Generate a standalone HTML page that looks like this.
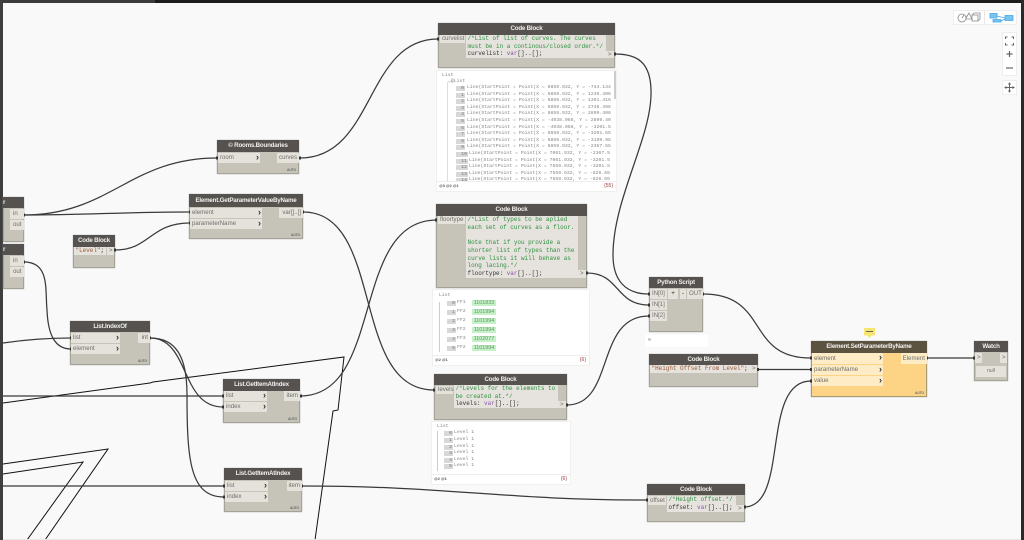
<!DOCTYPE html>
<html>
<head>
<meta charset="utf-8">
<style>
html,body{margin:0;padding:0;width:1024px;height:540px;overflow:hidden;background:#f9f9f9}
body{position:relative;font-family:"Liberation Sans",sans-serif}
#wrap{position:absolute;left:0;top:0;width:1024px;height:540px;filter:blur(.35px)}
.a,.n,.h,.p,.c,.pv{position:absolute;box-sizing:border-box}
.n{background:#c6c3b9;border:1px solid #a5a296;box-shadow:0 0 1px #999}
.h{background:#56524f;color:#f1f0ec;font-weight:bold;font-size:6.2px;letter-spacing:-.2px;text-align:center;z-index:2;line-height:11px}
.p{background:#e5e2dc;color:#6f6e6a;font-size:6.1px;line-height:10px;padding-left:2px;white-space:nowrap;z-index:2}
.r{text-align:right;padding:0 2px 0 0}
.p b{position:absolute;right:1px;top:-1px;color:#333;font-size:9px;font-weight:bold}
.c{background:#e6e3de;font-family:"Liberation Mono",monospace;font-size:5.95px;line-height:7.7px;white-space:pre;color:#333;z-index:2;padding-left:1.5px;overflow:hidden}
.g{color:#2f9040}.v{color:#8a55a8}.s{color:#9a5a3a}
.pv{background:#fff;border:1px solid #f0f0ee;font-family:"Liberation Mono",monospace;font-size:4.8px;color:#858585;overflow:hidden;white-space:pre}
.l{position:absolute;white-space:pre;line-height:6px}
.idx{position:absolute;background:#d8d8d8;color:#777;text-align:right;height:5px;line-height:5px;width:9px;padding-right:1px;box-sizing:border-box}
.grn{position:absolute;background:#c5f0c8;color:#5f9a62;height:6px;line-height:6px;width:24px;text-align:center;font-family:"Liberation Sans",sans-serif;font-size:5.4px}
.ft{position:absolute;left:0;right:0;bottom:0;height:10px;border-top:1px solid #eee;background:#fff;font:bold 3.8px/9px "Liberation Sans",sans-serif;color:#555;padding-left:2px;box-sizing:border-box}
.ft i{position:absolute;right:3px;top:0;color:#a04040;font:5px/9px "Liberation Sans",sans-serif}
.auto{position:absolute;right:2px;bottom:1px;font-size:3.2px;font-weight:bold;color:#666;z-index:2}
svg{position:absolute;left:0;top:0}
.ic{position:absolute;background:#fff;border:1px solid #eee;box-sizing:border-box}
</style>
</head>
<body>
<div id="wrap">
<div class="a" style="left:0;top:0;width:155px;height:3px;background:#3c3c3c"></div>
<div class="a" style="left:155px;top:0;width:869px;height:3px;background:#1c1c1c"></div>
<div class="a" style="left:0;top:0;width:3px;height:540px;background:#3e3e3e"></div>
<div class="a" style="left:1021px;top:0;width:3px;height:540px;background:#2a2a2a"></div>

<svg width="1024" height="540" fill="none" stroke="#111" stroke-width="1">
<path d="M3,403L150,383L153,382L344,357L338,410L333,411L315,540"/>
<path d="M3,464L108,449L45,540"/>
<path d="M3,474L83,462L27,540"/>
<g stroke="#3a3a3a" stroke-width="1.25">
<path d="M24,215C110,215 130,158 217,158"/>
<path d="M24,215C90,215 120,212 190,212"/>
<path d="M115,250C150,250 150,223 190,223"/>
<path d="M24,262C50,262 45,290 47,310C48,335 55,349 71,349"/>
<path d="M3,343C30,339 50,338 71,338"/>
<path d="M150,338C190,338 180,407 223,407"/>
<path d="M150,338C175,338 187,355 187,395C187,460 190,497 224,497"/>
<path d="M3,396L223,396"/>
<path d="M3,486L224,486"/>
<path d="M300,158C375,158 365,39 438,39"/>
<path d="M303,212C385,212 350,390 434,390"/>
<path d="M300,396C385,396 350,220 437,220"/>
<path d="M302,486C450,486 500,500 647,500"/>
<path d="M615,54C635,54 652,60 651,95C650,140 613,200 613,255C613,280 625,294 649,294"/>
<path d="M587,273C620,273 615,305 649,305"/>
<path d="M567,405C615,405 595,316 649,316"/>
<path d="M703,294C770,294 745,358 811,358"/>
<path d="M758,369.5L811,369.5"/>
<path d="M744,507C790,507 760,381 811,381"/>
<path d="M927,358L974,358"/>
</g>
</svg>

<!-- left partial nodes -->
<div class="n" style="left:3px;top:197px;width:21px;height:45px"></div>
<div class="h" style="left:3px;top:197px;width:21px;height:11px;text-align:left">r</div>
<div class="p" style="left:10px;top:209px;width:14px;padding-left:3px">in</div>
<div class="p" style="left:10px;top:220px;width:14px;padding-left:3px">out</div>
<div class="n" style="left:3px;top:244px;width:21px;height:45px"></div>
<div class="h" style="left:3px;top:244px;width:21px;height:11px;text-align:left">r</div>
<div class="p" style="left:10px;top:256px;width:14px;padding-left:3px">in</div>
<div class="p" style="left:10px;top:267px;width:14px;padding-left:3px">out</div>

<!-- Rooms.Boundaries -->
<div class="n" style="left:217px;top:140px;width:82px;height:34px"><span class="auto">AUTO</span></div>
<div class="h" style="left:217px;top:140px;width:82px;height:12px">© Rooms.Boundaries</div>
<div class="p" style="left:218px;top:153px;width:42px">room<b>›</b></div>
<div class="p r" style="left:277px;top:153px;width:22px">curves</div>

<!-- GetParameterValueByName -->
<div class="n" style="left:189px;top:194px;width:114px;height:45px"><span class="auto">AUTO</span></div>
<div class="h" style="left:189px;top:194px;width:114px;height:13px;line-height:13px">Element.GetParameterValueByName</div>
<div class="p" style="left:190px;top:208px;width:72px">element<b>›</b></div>
<div class="p" style="left:190px;top:219px;width:72px">parameterName<b>›</b></div>
<div class="p r" style="left:279px;top:208px;width:24px">var[]..[]</div>

<!-- Code Block Level -->
<div class="n" style="left:73px;top:235px;width:42px;height:33px"></div>
<div class="h" style="left:73px;top:235px;width:42px;height:12px">Code Block</div>
<div class="c" style="left:74px;top:247px;width:32px;height:8px"><span class="s">"Level"</span>;</div>
<div class="p" style="left:107px;top:247px;width:7px;height:8px;line-height:8px">&gt;</div>

<!-- IndexOf -->
<div class="n" style="left:70px;top:321px;width:80px;height:44px"><span class="auto">AUTO</span></div>
<div class="h" style="left:70px;top:321px;width:80px;height:11px">List.IndexOf</div>
<div class="p" style="left:71px;top:333px;width:49px">list<b>›</b></div>
<div class="p" style="left:71px;top:344px;width:49px">element<b>›</b></div>
<div class="p r" style="left:138px;top:333px;width:12px">int</div>

<!-- GetItemAtIndex 1 -->
<div class="n" style="left:223px;top:379px;width:77px;height:44px"><span class="auto">AUTO</span></div>
<div class="h" style="left:223px;top:379px;width:77px;height:12px">List.GetItemAtIndex</div>
<div class="p" style="left:224px;top:391px;width:43px">list<b>›</b></div>
<div class="p" style="left:224px;top:402px;width:43px">index<b>›</b></div>
<div class="p r" style="left:284px;top:391px;width:16px">item</div>

<!-- GetItemAtIndex 2 -->
<div class="n" style="left:224px;top:468px;width:78px;height:44px"><span class="auto">AUTO</span></div>
<div class="h" style="left:224px;top:468px;width:78px;height:12px">List.GetItemAtIndex</div>
<div class="p" style="left:225px;top:481px;width:43px">list<b>›</b></div>
<div class="p" style="left:225px;top:492px;width:43px">index<b>›</b></div>
<div class="p r" style="left:287px;top:481px;width:15px">item</div>

<!-- Code Block 1 -->
<div class="n" style="left:438px;top:23px;width:177px;height:45px"></div>
<div class="h" style="left:438px;top:23px;width:177px;height:12px">Code Block</div>
<div class="p" style="left:440px;top:35px;width:25px;height:8px;line-height:8px">curvelist</div>
<div class="c" style="left:466px;top:35px;width:140px;height:23px"><span class="g">/*List of list of curves. The curves
must be in a continous/closed order.*/</span>
curvelist: <span class="v">var</span>[]..[];</div>
<div class="p" style="left:606px;top:51px;width:8px;height:7px;line-height:7px">&gt;</div>

<div class="pv" style="left:436px;top:70px;width:181px;height:122px">
<span class="l" style="left:5px;top:2px">List</span>
<span class="l" style="left:11px;top:8px">⌄@List</span>
<span class="idx" style="left:19px;top:15px">0</span><span class="l" style="left:30px;top:14px">Line(StartPoint = Point(X = 6859.932, Y = -744.144</span>
<span class="idx" style="left:19px;top:22px">1</span><span class="l" style="left:30px;top:21px">Line(StartPoint = Point(X = 6859.932, Y = 1238.406</span>
<span class="idx" style="left:19px;top:28px">2</span><span class="l" style="left:30px;top:27px">Line(StartPoint = Point(X = 6859.932, Y = 1391.416</span>
<span class="idx" style="left:19px;top:35px">3</span><span class="l" style="left:30px;top:34px">Line(StartPoint = Point(X = 6859.932, Y = 2746.396</span>
<span class="idx" style="left:19px;top:41px">4</span><span class="l" style="left:30px;top:40px">Line(StartPoint = Point(X = 6859.932, Y = 2899.406</span>
<span class="idx" style="left:19px;top:48px">5</span><span class="l" style="left:30px;top:47px">Line(StartPoint = Point(X = -4938.068, Y = 2899.40</span>
<span class="idx" style="left:19px;top:55px">6</span><span class="l" style="left:30px;top:54px">Line(StartPoint = Point(X = -4938.068, Y = -3201.5</span>
<span class="idx" style="left:19px;top:61px">7</span><span class="l" style="left:30px;top:60px">Line(StartPoint = Point(X = 6859.932, Y = -3201.55</span>
<span class="idx" style="left:19px;top:68px">8</span><span class="l" style="left:30px;top:67px">Line(StartPoint = Point(X = 6859.932, Y = -3199.95</span>
<span class="idx" style="left:19px;top:74px">9</span><span class="l" style="left:30px;top:73px">Line(StartPoint = Point(X = 6859.932, Y = -2367.55</span>
<span class="idx" style="left:19px;top:81px;width:12px">10</span><span class="l" style="left:32px;top:80px">Line(StartPoint = Point(X = 7061.932, Y = -2367.5</span>
<span class="idx" style="left:19px;top:88px;width:12px">11</span><span class="l" style="left:32px;top:87px">Line(StartPoint = Point(X = 7061.932, Y = -3201.5</span>
<span class="idx" style="left:19px;top:94px;width:12px">12</span><span class="l" style="left:32px;top:93px">Line(StartPoint = Point(X = 7559.932, Y = -3201.5</span>
<span class="idx" style="left:19px;top:101px;width:12px">13</span><span class="l" style="left:32px;top:100px">Line(StartPoint = Point(X = 7559.932, Y = -826.65</span>
<span class="idx" style="left:19px;top:107px;width:12px">14</span><span class="l" style="left:32px;top:106px">Line(StartPoint = Point(X = 7559.932, Y = -826.65</span>
<span class="a" style="left:10px;top:11px;width:1px;height:99px;background:#ddd"></span>
<span class="a" style="left:177px;top:0;width:3px;height:28px;background:#ccc"></span>
<div class="ft">@3 @2 @1<i>{55}</i></div>
</div>

<!-- Code Block 2 -->
<div class="n" style="left:436px;top:204px;width:151px;height:84px"></div>
<div class="h" style="left:436px;top:204px;width:151px;height:12px">Code Block</div>
<div class="p" style="left:438px;top:216px;width:27px;height:8px;line-height:8px">floortype</div>
<div class="c" style="left:466px;top:216px;width:112px;height:62px"><span class="g">/*List of types to be aplied
each set of curves as a floor.

Note that if you provide a
shorter list of types than the
curve lists it will behave as
long lacing.*/</span>
floortype: <span class="v">var</span>[]..[];</div>
<div class="p" style="left:578px;top:270px;width:8px;height:8px;line-height:8px">&gt;</div>

<div class="pv" style="left:432px;top:289px;width:158px;height:77px">
<span class="l" style="left:6px;top:3px">List</span>
<span class="idx" style="left:14px;top:11px">0</span><span class="l" style="left:24px;top:10px">FF1</span><span class="grn" style="left:39px;top:10px">1101833</span>
<span class="idx" style="left:14px;top:20px">1</span><span class="l" style="left:24px;top:19px">FF2</span><span class="grn" style="left:39px;top:19px">1101994</span>
<span class="idx" style="left:14px;top:29px">2</span><span class="l" style="left:24px;top:28px">FF2</span><span class="grn" style="left:39px;top:28px">1101994</span>
<span class="idx" style="left:14px;top:38px">3</span><span class="l" style="left:24px;top:37px">FF2</span><span class="grn" style="left:39px;top:37px">1101994</span>
<span class="idx" style="left:14px;top:47px">4</span><span class="l" style="left:24px;top:46px">FF3</span><span class="grn" style="left:39px;top:46px">1102077</span>
<span class="idx" style="left:14px;top:56px">5</span><span class="l" style="left:24px;top:55px">FF2</span><span class="grn" style="left:39px;top:55px">1101994</span>
<span class="a" style="left:6px;top:12px;width:1px;height:50px;background:#ccc"></span>
<div class="ft">@2 @1<i>{6}</i></div>
</div>

<!-- Code Block 3 -->
<div class="n" style="left:434px;top:374px;width:133px;height:46px"></div>
<div class="h" style="left:434px;top:374px;width:133px;height:11px">Code Block</div>
<div class="p" style="left:436px;top:386px;width:17px;height:8px;line-height:8px">levels</div>
<div class="c" style="left:454px;top:385px;width:104px;height:23px"><span class="g">/*Levels for the elements to
be created at.*/</span>
levels: <span class="v">var</span>[]..[];</div>
<div class="p" style="left:558px;top:401px;width:8px;height:7px;line-height:7px">&gt;</div>

<div class="pv" style="left:431px;top:421px;width:140px;height:64px">
<span class="l" style="left:5px;top:2px">List</span>
<span class="idx" style="left:12px;top:9px">0</span><span class="l" style="left:22px;top:8px">Level 1</span>
<span class="idx" style="left:12px;top:16px">1</span><span class="l" style="left:22px;top:15px">Level 1</span>
<span class="idx" style="left:12px;top:23px">2</span><span class="l" style="left:22px;top:22px">Level 1</span>
<span class="idx" style="left:12px;top:29px">3</span><span class="l" style="left:22px;top:28px">Level 1</span>
<span class="idx" style="left:12px;top:36px">4</span><span class="l" style="left:22px;top:35px">Level 1</span>
<span class="idx" style="left:12px;top:42px">5</span><span class="l" style="left:22px;top:41px">Level 1</span>
<span class="a" style="left:5px;top:9px;width:1px;height:40px;background:#ccc"></span>
<div class="ft">@2 @1<i>{6}</i></div>
</div>

<!-- Python -->
<div class="n" style="left:649px;top:277px;width:54px;height:55px"></div>
<div class="h" style="left:649px;top:277px;width:54px;height:11px">Python Script</div>
<div class="p" style="left:650px;top:289px;width:17px">IN[0]</div>
<div class="p" style="left:650px;top:300px;width:17px">IN[1]</div>
<div class="p" style="left:650px;top:311px;width:17px">IN[2]</div>
<div class="p" style="left:668px;top:289px;width:10px;text-align:center;padding:0;color:#222">+</div>
<div class="p" style="left:680px;top:289px;width:6px;text-align:center;padding:0;color:#222">-</div>
<div class="p" style="left:687px;top:289px;width:16px">OUT</div>
<div class="pv" style="left:645px;top:335px;width:63px;height:12px;border:0"><span class="l" style="left:3px;top:3px">0</span></div>

<!-- Code height offset -->
<div class="n" style="left:649px;top:354px;width:109px;height:33px"></div>
<div class="h" style="left:649px;top:354px;width:109px;height:11px">Code Block</div>
<div class="c" style="left:650px;top:365px;width:100px;height:8px"><span class="s">"Height Offset From Level"</span>;</div>
<div class="p" style="left:750px;top:365px;width:7px;height:8px;line-height:8px">&gt;</div>

<!-- SetParameterByName -->
<div class="n" style="left:811px;top:341px;width:116px;height:56px;background:#fdd486;border-color:#a89a70"><span class="auto">AUTO</span></div>
<div class="h" style="left:811px;top:341px;width:116px;height:12px;background:#5c5240">Element.SetParameterByName</div>
<div class="p" style="left:812px;top:353px;width:71px;height:11px;background:#feecc6;line-height:11px">element<b>›</b></div>
<div class="p" style="left:812px;top:365px;width:71px;height:10px;background:#feecc6">parameterName<b>›</b></div>
<div class="p" style="left:812px;top:376px;width:71px;height:10px;background:#feecc6">value<b>›</b></div>
<div class="p r" style="left:901px;top:353px;width:26px;height:11px;background:#feecc6;line-height:11px">Element</div>
<div class="a" style="left:864px;top:328px;width:11px;height:10px;background:#f6e572;clip-path:polygon(0 0,100% 0,100% 75%,70% 75%,50% 100%,30% 75%,0 75%)"><div class="a" style="left:2px;top:3px;width:7px;height:1px;background:#665"></div></div>

<!-- Watch -->
<div class="n" style="left:974px;top:341px;width:34px;height:40px"></div>
<div class="h" style="left:974px;top:341px;width:34px;height:11px">Watch</div>
<div class="p" style="left:975px;top:353px;width:7px">&gt;</div>
<div class="p" style="left:1000px;top:353px;width:7px">&gt;</div>
<div class="p" style="left:976px;top:366px;width:30px;height:11px;line-height:11px;text-align:center;padding:0;font-size:5px">null</div>

<!-- Code offset -->
<div class="n" style="left:647px;top:484px;width:98px;height:38px"></div>
<div class="h" style="left:647px;top:484px;width:98px;height:11px">Code Block</div>
<div class="p" style="left:648px;top:496px;width:18px;height:9px;line-height:9px">offset</div>
<div class="c" style="left:667px;top:496px;width:69px;height:16px"><span class="g">/*Height offset.*/</span>
offset: <span class="v">var</span>[]..[];</div>
<div class="p" style="left:736px;top:505px;width:8px;height:7px;line-height:7px">&gt;</div>

<!-- port dots -->
<svg width="1024" height="540" fill="#333" stroke="none">
<rect x="216" y="156.500" width="2" height="3"/><rect x="299" y="156.500" width="2" height="3"/>
<rect x="189" y="210.500" width="2" height="3"/><rect x="189" y="221.500" width="2" height="3"/><rect x="302" y="210.500" width="2" height="3"/>
<rect x="23" y="213.500" width="2" height="3"/><rect x="23" y="260.500" width="2" height="3"/><rect x="114" y="248.500" width="2" height="3"/>
<rect x="70" y="336.500" width="2" height="3"/><rect x="70" y="347.500" width="2" height="3"/><rect x="149" y="336.500" width="2" height="3"/>
<rect x="222" y="394.500" width="2" height="3"/><rect x="222" y="405.500" width="2" height="3"/><rect x="300" y="394.500" width="2" height="3"/>
<rect x="223" y="484.500" width="2" height="3"/><rect x="223" y="495.500" width="2" height="3"/><rect x="301" y="484.500" width="2" height="3"/>
<rect x="437" y="37.500" width="2" height="3"/><rect x="614" y="52.500" width="2" height="3"/>
<rect x="435" y="218.500" width="2" height="3"/><rect x="586" y="271.500" width="2" height="3"/>
<rect x="433" y="388.500" width="2" height="3"/><rect x="566" y="403.500" width="2" height="3"/>
<rect x="648" y="292.500" width="2" height="3"/><rect x="648" y="303.500" width="2" height="3"/><rect x="648" y="314.500" width="2" height="3"/><rect x="702" y="292.500" width="2" height="3"/>
<rect x="757" y="368" width="2" height="3"/><rect x="810" y="356.500" width="2" height="3"/><rect x="810" y="368" width="2" height="3"/><rect x="810" y="379.500" width="2" height="3"/><rect x="926" y="356.500" width="2" height="3"/><rect x="973" y="356.500" width="2" height="3"/>
<rect x="646" y="498.500" width="2" height="3"/><rect x="744" y="505.500" width="2" height="3"/>
</svg>

<!-- toolbar -->
<div class="ic" style="left:953px;top:10px;width:64px;height:15px"></div>
<div class="a" style="left:984px;top:10px;width:1px;height:15px;background:#e8e8e8"></div>
<svg width="1024" height="540" fill="none" stroke="#8a8a8a" stroke-width=".8">
<circle cx="962" cy="18" r="4"/><path d="M962,18L964,15M966,18L969,13L972,19H966"/><rect x="972" y="15" width="6" height="6"/><path d="M972,15L974,13H980V19L978,21"/>
<g stroke="#4aa8e8" fill="#7cc4f0"><rect x="990" y="13.500" width="7" height="4.500"/><rect x="1005" y="15.500" width="8" height="5"/><rect x="993" y="19.500" width="8" height="2.500"/><path d="M997,16L1005,18M1001,21L1005,19" fill="none"/></g>
</svg>
<div class="ic" style="left:1002px;top:32px;width:15px;height:44px"></div>
<div class="ic" style="left:1002px;top:80px;width:15px;height:15px"></div>
<svg width="1024" height="540" fill="none" stroke="#666" stroke-width="1">
<g transform="translate(-.5,0)">
<path d="M1006,39V37H1008M1012,37H1014V39M1014,43V45H1012M1008,45H1006V43"/>
<path d="M1010,51V57M1007,54H1013" stroke-width="1.2"/>
<path d="M1006.500,68H1013.500" stroke-width="1.2"/>
<path d="M1010,83V92M1005.500,87.500H1014.500M1009,84.500L1010,83L1011,84.500M1009,90.500L1010,92L1011,90.500M1007,86.500L1005.500,87.500L1007,88.500M1013,86.500L1014.500,87.500L1013,88.500"/>
</g>
</svg>
<div class="a" style="left:3px;top:539px;width:1018px;height:1px;background:#e8e8e8"></div>
</div>
</body>
</html>
